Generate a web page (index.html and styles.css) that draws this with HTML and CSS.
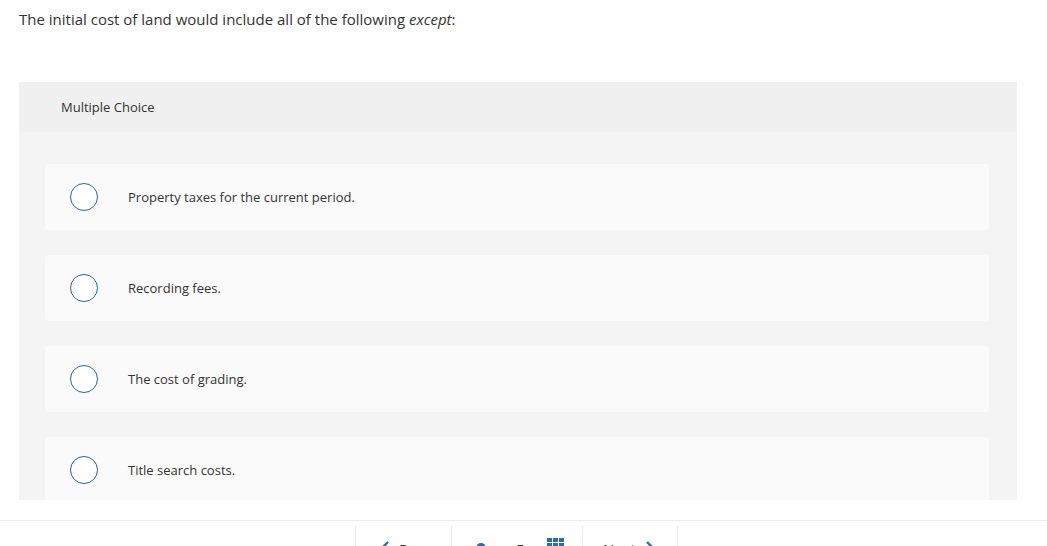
FILE: index.html
```html
<!DOCTYPE html>
<html lang="en">
<head>
  <meta charset="UTF-8">
  <title>Multiple Choice</title>
  <link rel="stylesheet" href="styles.css">
</head>
<body>
  <div class="question">The initial cost of land would include all of the following <em>except</em>:</div>

  <div class="panel">
    <div class="panel-header">Multiple Choice</div>
    <div class="options">
      <label class="option"><span class="radio"></span><span class="option-text">Property taxes for the current period.</span></label>
      <label class="option"><span class="radio"></span><span class="option-text">Recording fees.</span></label>
      <label class="option"><span class="radio"></span><span class="option-text">The cost of grading.</span></label>
      <label class="option"><span class="radio"></span><span class="option-text">Title search costs.</span></label>
    </div>
  </div>

  <div class="footer">
    <div class="nav">
      <div class="nav-item prev">
        <svg width="10" height="12" viewBox="0 0 10 12"><path d="M7 1 L2 6 L7 11" fill="none" stroke="#2b6cb0" stroke-width="2.4"/></svg>
        <span>Prev</span>
      </div>
      <div class="nav-item middle">
        <svg width="14" height="12" viewBox="0 0 14 12"><circle cx="7" cy="7" r="5" fill="#2b6cb0"/></svg>
        <span class="num">5</span>
        <svg class="grid" width="18" height="14" viewBox="0 0 18 14">
          <rect x="0" y="0" width="5" height="4" fill="#2b6cb0"/>
          <rect x="6" y="0" width="5" height="4" fill="#2b6cb0"/>
          <rect x="12" y="0" width="5" height="4" fill="#2b6cb0"/>
          <rect x="0" y="5" width="5" height="4" fill="#2b6cb0"/>
          <rect x="6" y="5" width="5" height="4" fill="#2b6cb0"/>
          <rect x="12" y="5" width="5" height="4" fill="#2b6cb0"/>
        </svg>
      </div>
      <div class="nav-item next">
        <span>Next</span>
        <svg width="10" height="12" viewBox="0 0 10 12"><path d="M3 1 L8 6 L3 11" fill="none" stroke="#2b6cb0" stroke-width="2.4"/></svg>
      </div>
    </div>
  </div>
</body>
</html>
```

FILE: styles.css
```css
body {
  margin: 0;
  font-family: 'Open Sans', 'Liberation Sans', sans-serif;
  color: #333;
  background: #fff;
  height: 546px;
  overflow: hidden;
}
.question {
  padding: 10px 19px 0 19px;
  height: 82px;
  box-sizing: border-box;
  font-size: 15px;
  line-height: 19px;
}
.panel {
  margin: 0 30px 0 19px;
  height: 418px;
  overflow: hidden;
  background: #f4f4f4;
}
.panel-header {
  height: 50px;
  box-sizing: border-box;
  padding: 16px 42px 0;
  font-size: 13px;
  line-height: 18px;
  background: #f0f0f0;
}
.options {
  display: flex;
  flex-direction: column;
  gap: 25px;
  padding: 32px 28px 0 26px;
}
.option {
  display: flex;
  align-items: center;
  gap: 30px;
  height: 66px;
  flex-shrink: 0;
  padding-left: 25px;
  background: #fafafa;
  border-radius: 4px;
  cursor: pointer;
}
.radio {
  width: 28px;
  height: 28px;
  box-sizing: border-box;
  border: 1.5px solid #2c5f98;
  border-radius: 50%;
  background: #fff;
  flex-shrink: 0;
}
.option-text {
  font-size: 13px;
  line-height: 18px;
}
.footer {
  margin-top: 20px;
  border-top: 1px solid #ececec;
  padding-top: 5px;
}
.nav {
  display: flex;
  margin-left: 355px;
}
.nav-item {
  display: flex;
  align-items: flex-start;
  gap: 8px;
  height: 40px;
  box-sizing: border-box;
  padding-top: 12px;
  border-left: 1px solid #ececec;
  font-size: 15px;
  line-height: 18px;
}
.nav-item span {
  margin-top: 2px;
}
.nav-item svg {
  margin-top: 3px;
}
.prev {
  width: 96px;
  padding-left: 25px;
}
.middle {
  width: 131px;
  padding-left: 22px;
}
.next {
  width: 96px;
  padding-left: 20px;
  border-right: 1px solid #ececec;
}
.num {
  margin-left: 20px;
}
.nav-item .grid {
  margin-left: 14px;
  margin-top: 0;
}
```
